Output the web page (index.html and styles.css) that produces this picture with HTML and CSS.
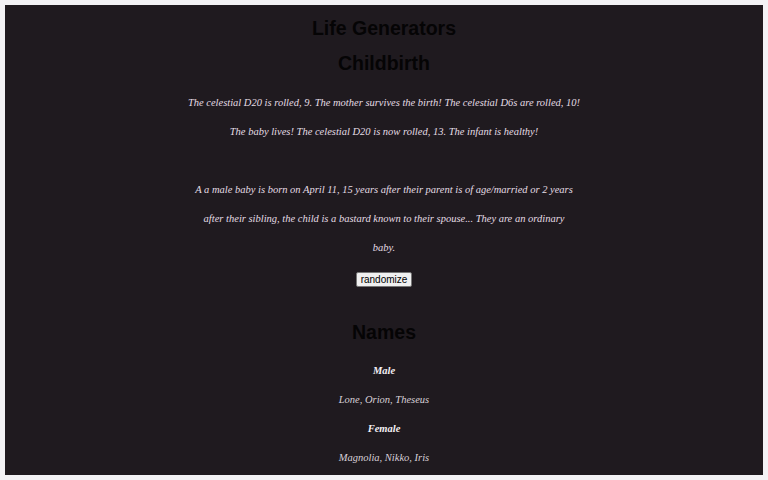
FILE: index.html
```html
<!DOCTYPE html>
<html lang="en">
<head>
  <meta charset="UTF-8" />
  <meta name="viewport" content="width=device-width" />
  <title>Life Generators</title>
  <link rel="stylesheet" href="styles.css">
</head>

<body>
  <div class="page">
    <h1>Life Generators</h1>
    <div class="generator">
      <h2>Childbirth</h2>
      <p class="story">The celestial D20 is rolled, 9. The mother survives the birth! The celestial D6s are rolled, 10! The baby lives! The celestial D20 is now rolled, 13. The infant is healthy!</p>
      <p class="story">&nbsp;</p>
      <p class="story summary">A a male baby is born on April 11, 15 years after their parent is of age/married or 2 years after their sibling, the child is a bastard known to their spouse... They are an ordinary baby.</p>
      <button type="button" id="randomize">randomize</button>
    </div>
    <div class="names">
      <h2>Names</h2>
      <p class="label">Male</p>
      <p class="list">Lone, Orion, Theseus</p>
      <p class="label">Female</p>
      <p class="list">Magnolia, Nikko, Iris</p>
    </div>
  </div>
</body>
</html>
```

FILE: styles.css
```css
body {
  margin: 5px;
  background: #f3f2f5;
  font-family: "Liberation Sans", Arial, sans-serif;
}
.page {
  height: 470px;
  overflow: hidden;
  background: #1f1a1f;
  text-align: center;
}
h1,
h2 {
  margin: 0;
  padding-top: 11px;
  font-size: 19.5px;
  line-height: 24px;
  color: #050405;
}
.story,
.label,
.list {
  margin: 0 auto;
  font-family: "Liberation Serif", "Times New Roman", serif;
  font-style: italic;
  font-size: 10.5px;
  line-height: 29px;
  color: #e4dde4;
}
.story {
  max-width: 400px;
}
.story.summary {
  max-width: 382px;
}
.generator h2 {
  margin-bottom: 12.5px;
}
button {
  margin-top: 10px;
  padding: 1px 4px;
  font-family: "Liberation Sans", Arial, sans-serif;
  font-size: 10px;
  line-height: 11px;
  color: #000;
  background: #f0f0f0;
  border: 1px solid #767676;
  border-radius: 2px;
}
.names {
  margin-top: 22px;
}
.names h2 {
  margin-bottom: 12.5px;
}
.label {
  font-weight: bold;
  color: #f4f0f4;
}
.list {
  color: #d8d0d8;
}
```
